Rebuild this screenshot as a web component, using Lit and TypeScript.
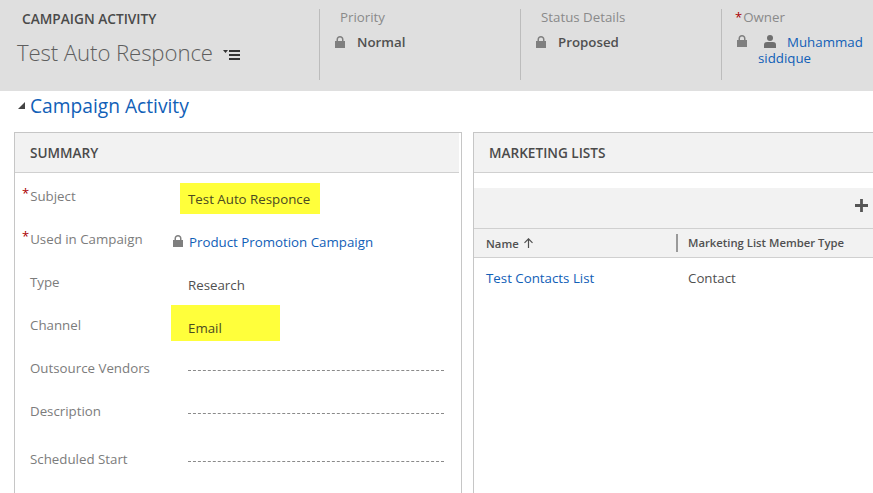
import { css, html, LitElement, svg } from "lit";
import { customElement } from "lit/decorators.js";

const lock = html`<svg class="lock" width="10" height="12" viewBox="0 0 10 12">
  ${svg`<path fill="#7f7f7f" d="M0 5h1.500V3.500C1.500 1.400 3 0 5 0s3.500 1.400 3.500 3.500V5H10v7H0zM3 5h4V3.500C7 2.300 6.200 1.500 5 1.500S3 2.300 3 3.500z"/>`}
</svg>`;

const person = html`<svg class="person" width="12" height="13" viewBox="0 0 12 13">
  ${svg`<circle cx="6" cy="3" r="3" fill="#6f6f6f"/><path fill="#6f6f6f" d="M0 13V9.500C0 7.800 1.500 7 3 7h6c1.500 0 3 .8 3 2.500V13z"/>`}
</svg>`;

const menu = html`<svg class="menu" width="17" height="10" viewBox="0 0 17 10">
  ${svg`<path fill="#333" d="M0 0h5L2.500 3zM6 0h11v2H6zM6 4h11v2H6zM6 8h11v2H6z"/>`}
</svg>`;

const sortUp = html`<svg class="sort" width="9" height="10" viewBox="0 0 9 10">
  ${svg`<path fill="none" stroke="#505050" stroke-width="1.200" d="M4.500 10V1M.5 4.800l4-4 4 4"/>`}
</svg>`;

@customElement("app-root")
export class AppRoot extends LitElement {
  static styles = css`
    :host {
      display: block;
      width: 873px;
      height: 493px;
      overflow: hidden;
      background: #fff;
      font-family: "Open Sans", "Noto Sans", sans-serif;
      font-size: 13.300px;
      color: #444;
    }

    a {
      color: #1160b7;
      text-decoration: none;
    }

    .req {
      color: #a00;
      font-size: 13px;
      line-height: 1;
    }

    /* header band */
    .header {
      height: 91px;
      box-sizing: border-box;
      background: #dfdfdf;
      display: flex;
      padding-top: 9px;
    }
    .title-block {
      width: 319px;
      box-sizing: border-box;
      padding-left: 17px;
    }
    .entity {
      margin: 1px 0 0 5px;
      font-size: 13.700px;
      font-weight: 600;
      line-height: 18px;
      color: #4a4a4a;
    }
    .record {
      display: flex;
      align-items: center;
      gap: 10px;
      margin-top: 9px;
    }
    .record-name {
      font-size: 22.200px;
      font-weight: 300;
      line-height: 32px;
      color: #5e5e5e;
      letter-spacing: -0.1px;
    }
    .menu {
      margin-top: 4px;
    }
    .field {
      width: 201px;
      height: 71px;
      box-sizing: border-box;
      border-left: 1px solid #bcbcbc;
      padding-left: 15px;
    }
    .field-label {
      height: 17px;
      line-height: 17px;
      padding-left: 5px;
      color: #8a8a8a;
    }
    .field-label.req-label {
      padding-left: 0;
    }
    .req-label .req {
      margin-right: 1px;
    }
    .field-value {
      display: flex;
      align-items: center;
      gap: 12px;
      margin-top: 7px;
      height: 17px;
      font-weight: 600;
      color: #505050;
    }
    .owner {
      width: 152px;
      padding-left: 13px;
    }
    .owner-value {
      margin-top: 8px;
      display: flex;
      align-items: flex-start;
      flex-wrap: wrap;
      line-height: 16px;
    }
    .owner-value .lock {
      margin: 1px 17px 0 2px;
    }
    .owner-value .person {
      margin: 1px 11px 0 0;
    }
    .owner-second {
      width: 100%;
      padding-left: 23px;
    }

    /* section */
    .section-title {
      display: flex;
      align-items: center;
      gap: 5px;
      height: 28px;
      padding-left: 18px;
      margin-bottom: 13px;
      font-size: 19.200px;
      color: #1160b7;
    }
    .caret {
      width: 0;
      height: 0;
      border-style: solid;
      border-width: 0 0 7px 7px;
      border-color: transparent transparent #444 transparent;
    }
    .columns {
      display: flex;
      padding-left: 14px;
      gap: 11px;
    }
    .panel {
      box-sizing: border-box;
      height: 361px;
      border: 1px solid #c6c6c6;
      border-bottom: 0;
    }
    .summary {
      width: 448px;
      padding-right: 2px;
    }
    .lists {
      flex: 1;
      border-right: 0;
    }
    .panel-head {
      height: 40px;
      box-sizing: border-box;
      background: #f2f2f2;
      border-bottom: 1px solid #d0d0d0;
      padding-left: 15px;
      line-height: 39px;
      font-size: 13.600px;
      font-weight: 600;
      color: #4a4a4a;
    }

    /* summary form */
    .rows {
      padding-top: 2px;
    }
    .row {
      display: grid;
      grid-template-columns: 158px 256px;
      height: 43px;
      padding-left: 15px;
    }
    .row.tall {
      height: 48px;
      align-items: start;
    }
    .label {
      height: 43px;
      line-height: 43px;
      color: #7c7c7c;
    }
    .row.tall .label {
      padding-top: 5px;
    }
    .label .req {
      margin-left: -8px;
      margin-right: 1px;
      vertical-align: 3px;
    }
    .value {
      display: flex;
      align-items: center;
      height: 43px;
      padding-top: 5px;
      box-sizing: border-box;
      color: #505050;
    }
    .row.tall .value {
      height: 48px;
      padding-top: 10px;
    }
    .value .lock {
      margin: -2px 6px 0 -15px;
    }
    .dashes {
      flex: 1;
      height: 0;
      border-top: 1px dashed #8a8a8a;
      margin-top: -2px;
    }
    .mark {
      background: #ffff3b;
      color: #4a4a22;
    }
    .mark.subject {
      margin: 0 0 1px -8px;
      padding: 7px 10px 6px 8px;
    }
    .mark.channel {
      margin: 0 0 10px -17px;
      padding: 14px 58px 4px 17px;
    }

    /* marketing lists grid */
    .grid-bar {
      height: 41px;
      margin-top: 15px;
      box-sizing: border-box;
      background: #f2f2f2;
      border-bottom: 1px solid #d0d0d0;
      display: flex;
      justify-content: flex-end;
      align-items: center;
      padding: 0 5px 6px 0;
    }
    .plus {
      display: block;
    }
    .grid-head {
      height: 29px;
      box-sizing: border-box;
      background: #f2f2f2;
      border-bottom: 1px solid #d0d0d0;
      display: grid;
      grid-template-columns: 202px 1fr;
      align-items: center;
      font-size: 11.300px;
      font-weight: 600;
      color: #505050;
    }
    .grid-head > div {
      padding-left: 12px;
    }
    .grid-head .second {
      padding-left: 10px;
      border-left: 2px solid #9a9a9a;
      height: 18px;
      line-height: 18px;
    }
    .sort {
      margin-left: 2px;
    }
    .grid-row {
      display: grid;
      grid-template-columns: 202px 1fr;
      height: 40px;
      align-items: center;
      padding-left: 12px;
      color: #505050;
    }
  `;

  render() {
    return html`
      <div class="header">
        <div class="title-block">
          <div class="entity">CAMPAIGN ACTIVITY</div>
          <div class="record">
            <span class="record-name">Test Auto Responce</span>${menu}
          </div>
        </div>
        <div class="field">
          <div class="field-label">Priority</div>
          <div class="field-value">${lock}<span>Normal</span></div>
        </div>
        <div class="field">
          <div class="field-label">Status Details</div>
          <div class="field-value">${lock}<span>Proposed</span></div>
        </div>
        <div class="field owner">
          <div class="field-label req-label"><span class="req">*</span>Owner</div>
          <div class="owner-value">
            ${lock}${person}<a>Muhammad</a>
            <a class="owner-second">siddique</a>
          </div>
        </div>
      </div>

      <div class="section-title"><span class="caret"></span>Campaign Activity</div>

      <div class="columns">
        <div class="panel summary">
          <div class="panel-head">SUMMARY</div>
          <div class="rows">
            <div class="row">
              <div class="label"><span class="req">*</span>Subject</div>
              <div class="value"><span class="mark subject">Test Auto Responce</span></div>
            </div>
            <div class="row">
              <div class="label"><span class="req">*</span>Used in Campaign</div>
              <div class="value">${lock}<a>Product Promotion Campaign</a></div>
            </div>
            <div class="row">
              <div class="label">Type</div>
              <div class="value">Research</div>
            </div>
            <div class="row">
              <div class="label">Channel</div>
              <div class="value"><span class="mark channel">Email</span></div>
            </div>
            <div class="row">
              <div class="label">Outsource Vendors</div>
              <div class="value"><span class="dashes"></span></div>
            </div>
            <div class="row">
              <div class="label">Description</div>
              <div class="value"><span class="dashes"></span></div>
            </div>
            <div class="row tall">
              <div class="label">Scheduled Start</div>
              <div class="value"><span class="dashes"></span></div>
            </div>
          </div>
        </div>

        <div class="panel lists">
          <div class="panel-head">MARKETING LISTS</div>
          <div class="grid-bar">
            <svg class="plus" width="13" height="13" viewBox="0 0 14 14">
              <path fill="#555" d="M5.500 0h3v5.500H14v3H8.500V14h-3V8.500H0v-3h5.500z" />
            </svg>
          </div>
          <div class="grid-head">
            <div>Name ${sortUp}</div>
            <div class="second">Marketing List Member Type</div>
          </div>
          <div class="grid-row"><a>Test Contacts List</a><span>Contact</span></div>
        </div>
      </div>
    `;
  }
}
